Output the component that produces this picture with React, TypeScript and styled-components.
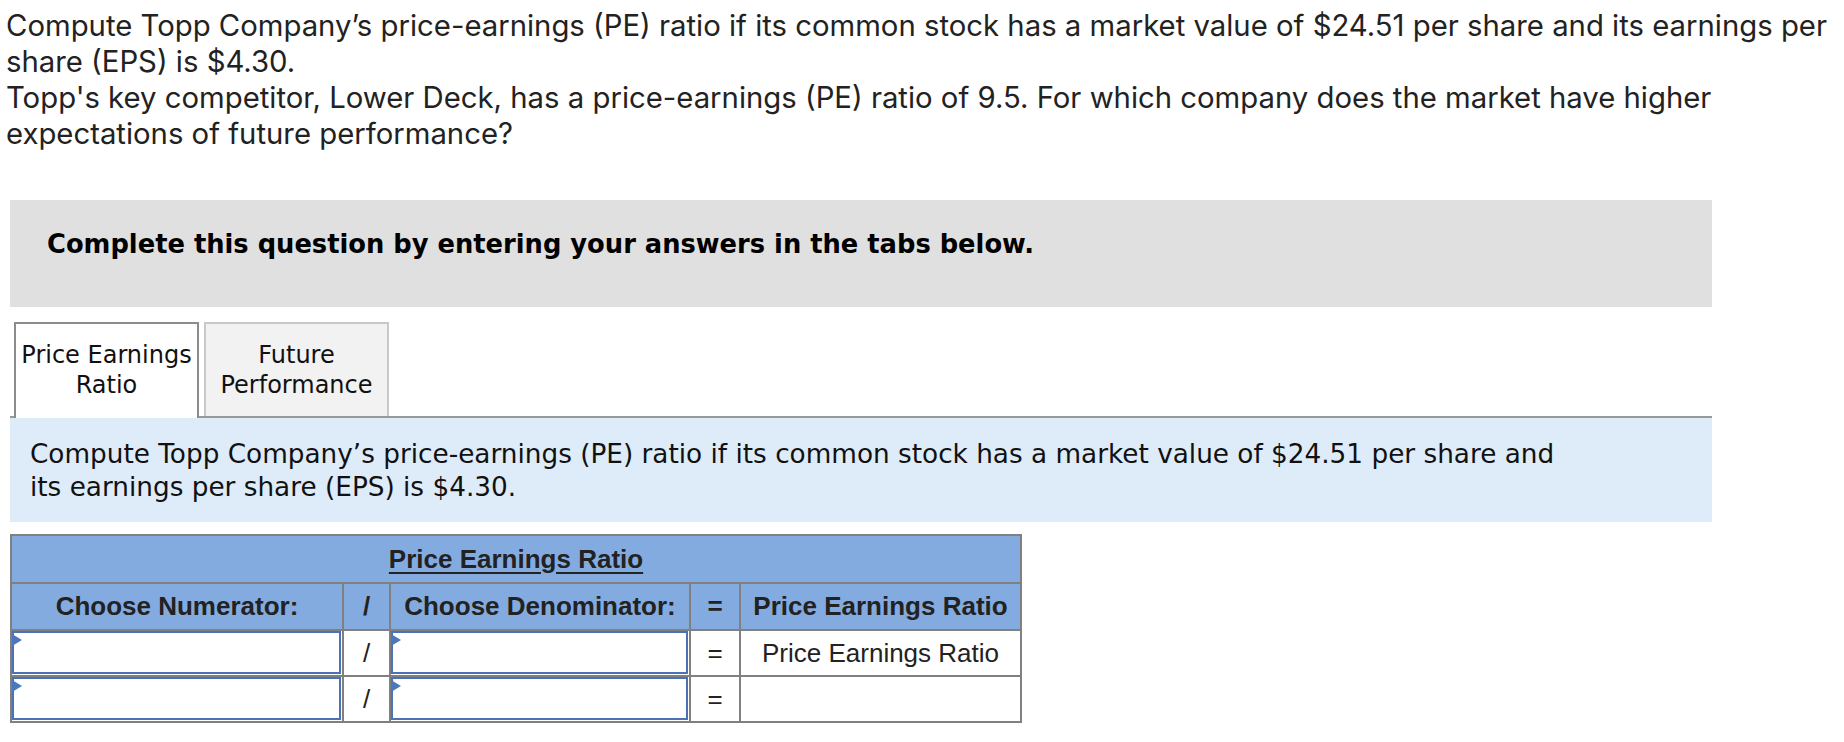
import { Fragment } from "react";
import styled, { createGlobalStyle } from "styled-components";

const GlobalStyle = createGlobalStyle`
  html, body { margin: 0; padding: 0; background: #fff; }
  body { font-family: "Liberation Sans", Arial, sans-serif; color: #222; }
`;

const Page = styled.div`
  width: 1844px;
  padding-top: 8px;
`;

const Prompt = styled.div`
  padding-left: 6px;
  font-family: "Inter", "Liberation Sans", sans-serif;
  font-size: 29.3px;
  line-height: 36px;
  color: #222;
`;

const Banner = styled.div`
  margin: 48px 0 0 10px;
  width: 1702px;
  height: 107px;
  box-sizing: border-box;
  padding: 29px 0 0 37px;
  background: #e0e0e0;
  font-family: "DejaVu Sans", Verdana, sans-serif;
  font-weight: bold;
  font-size: 25.75px;
  line-height: 30px;
  color: #000;
`;

const TabRow = styled.div`
  display: flex;
  align-items: flex-end;
  gap: 5px;
  margin: 15px 0 0 10px;
  padding-left: 4px;
  width: 1702px;
  box-sizing: border-box;
  border-bottom: 2px solid #999;
`;

const Tab = styled.div<{ $active?: boolean }>`
  width: 185px;
  height: ${({ $active }) => ($active ? "96px" : "94px")};
  margin-bottom: ${({ $active }) => ($active ? "-2px" : "0")};
  box-sizing: border-box;
  padding-top: 16px;
  border: 2px solid ${({ $active }) => ($active ? "#8c8c8c" : "#c8c8c8")};
  border-bottom: none;
  background: ${({ $active }) => ($active ? "#fff" : "#f2f2f2")};
  font-family: "DejaVu Sans", Verdana, sans-serif;
  font-size: 24px;
  line-height: 30px;
  text-align: center;
  color: #111;
`;

const Instructions = styled.div`
  margin-left: 10px;
  width: 1702px;
  box-sizing: border-box;
  padding: 20px 20px 18px;
  background: #deebf8;
  font-family: "DejaVu Sans", Verdana, sans-serif;
  font-size: 26.3px;
  line-height: 33px;
  color: #111;
`;

const InstructionText = styled.div`
  max-width: 1545px;
`;

const Grid = styled.div`
  display: grid;
  grid-template-columns: 330px 45px 298px 48px 279px;
  grid-template-rows: 46px 45px 44px 44px;
  gap: 2px;
  padding: 2px;
  margin: 12px 0 0 10px;
  width: max-content;
  background: #808080;
  font-family: "Liberation Sans", Arial, sans-serif;
  font-size: 26px;
  color: #222;
`;

const HeadCell = styled.div<{ $span?: number }>`
  grid-column: span ${({ $span }) => $span ?? 1};
  display: flex;
  align-items: center;
  justify-content: center;
  background: #84abe0;
  font-weight: bold;
`;

const Title = styled.span`
  text-decoration: underline;
  text-underline-offset: 4px;
`;

const Cell = styled.div`
  display: flex;
  align-items: center;
  justify-content: center;
  background: #fff;
`;

const InputCell = styled.div`
  position: relative;
  background: #fff;
  padding: 0 1px 1px 0;
`;

const Entry = styled.input`
  display: block;
  width: 100%;
  height: 100%;
  box-sizing: border-box;
  margin: 0;
  border: 2px solid #4a72b5;
  background: #fff;
  font: inherit;
  outline: none;
`;

const Marker = styled.span`
  position: absolute;
  left: 0;
  top: 3px;
  width: 0;
  height: 0;
  border-top: 6px solid transparent;
  border-bottom: 6px solid transparent;
  border-left: 10px solid #4a78bd;
  pointer-events: none;
`;

const rows = [{ result: "Price Earnings Ratio" }, { result: "" }];

export default function App() {
  return (
    <Page>
      <GlobalStyle />
      <Prompt>
        <div>
          Compute Topp Company’s price-earnings (PE) ratio if its common stock has a market value of $24.51 per share
          and its earnings per share (EPS) is $4.30.
        </div>
        <div>
          Topp's key competitor, Lower Deck, has a price-earnings (PE) ratio of 9.5. For which company does the market
          have higher expectations of future performance?
        </div>
      </Prompt>

      <Banner>Complete this question by entering your answers in the tabs below.</Banner>

      <TabRow>
        <Tab $active>
          Price Earnings
          <br />
          Ratio
        </Tab>
        <Tab>
          Future
          <br />
          Performance
        </Tab>
      </TabRow>

      <Instructions>
        <InstructionText>
          Compute Topp Company’s price-earnings (PE) ratio if its common stock has a market value of $24.51 per share
          and its earnings per share (EPS) is $4.30.
        </InstructionText>
      </Instructions>

      <Grid>
        <HeadCell $span={5}>
          <Title>Price Earnings Ratio</Title>
        </HeadCell>
        <HeadCell>Choose Numerator:</HeadCell>
        <HeadCell>/</HeadCell>
        <HeadCell>Choose Denominator:</HeadCell>
        <HeadCell>=</HeadCell>
        <HeadCell>Price Earnings Ratio</HeadCell>
        {rows.map((row, i) => (
          <Fragment key={i}>
            <InputCell>
              <Entry type="text" />
              <Marker />
            </InputCell>
            <Cell>/</Cell>
            <InputCell>
              <Entry type="text" />
              <Marker />
            </InputCell>
            <Cell>=</Cell>
            <Cell>{row.result}</Cell>
          </Fragment>
        ))}
      </Grid>
    </Page>
  );
}
